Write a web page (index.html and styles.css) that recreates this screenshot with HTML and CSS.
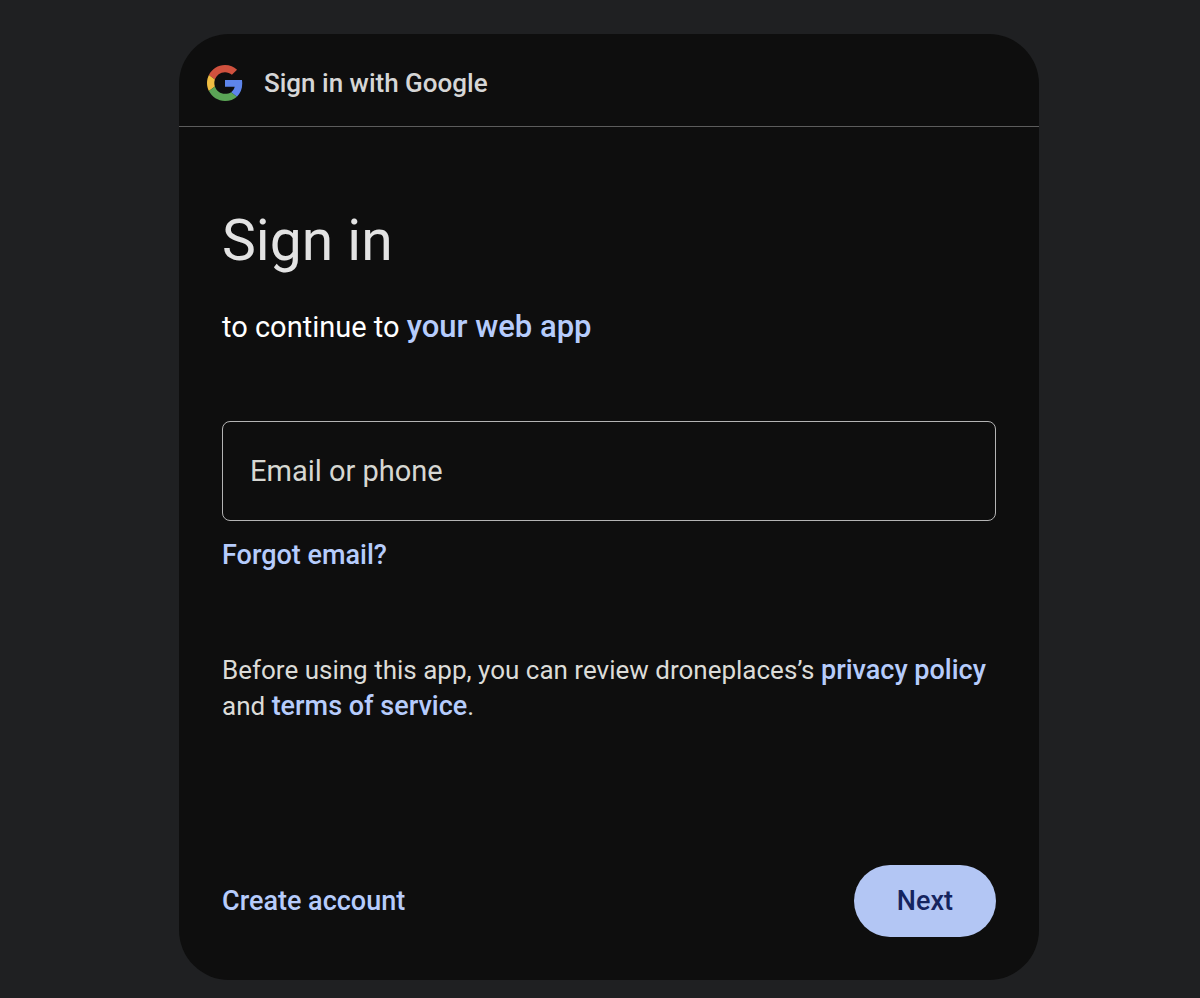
FILE: index.html
```
<!DOCTYPE html>
<html lang="en">
<head>
<meta charset="utf-8">
<meta name="viewport" content="width=device-width, initial-scale=1">
<title>Sign in</title>
<link rel="stylesheet" href="styles.css">
</head>
<body>
<main class="card">
  <header class="card-header">
    <svg class="logo" viewBox="0 0 48 48" aria-hidden="true">
      <path fill="#cf513e" d="M24 9.5c3.54 0 6.71 1.22 9.21 3.6l6.85-6.85C35.9 2.38 30.47 0 24 0 14.62 0 6.51 5.38 2.56 13.22l7.98 6.19C12.43 13.72 17.74 9.5 24 9.5z"/>
      <path fill="#5e85eb" d="M46.98 24.55c0-1.57-.15-3.09-.38-4.55H24v9.02h12.94c-.58 2.96-2.26 5.48-4.78 7.18l7.73 6c4.51-4.18 7.09-10.36 7.09-17.65z"/>
      <path fill="#f0bd42" d="M10.53 28.59c-.48-1.45-.76-2.99-.76-4.59s.27-3.14.76-4.59l-7.98-6.19C.92 16.46 0 20.12 0 24c0 3.88.92 7.54 2.56 10.78l7.97-6.19z"/>
      <path fill="#5ba556" d="M24 48c6.48 0 11.93-2.13 15.89-5.81l-7.73-6c-2.15 1.45-4.92 2.3-8.16 2.3-6.26 0-11.57-4.22-13.47-9.91l-7.98 6.19C6.51 42.62 14.62 48 24 48z"/>
    </svg>
    <span class="brand">Sign in with Google</span>
  </header>
  <form class="content">
    <h1 class="title">Sign in</h1>
    <p class="subtitle">to continue to <a class="link link-large" href="#app">your web app</a></p>
    <input class="field" type="text" name="identifier" placeholder="Email or phone" aria-label="Email or phone">
    <a class="link forgot" href="#forgot">Forgot email?</a>
    <p class="legal">Before using this app, you can review droneplaces’s <a class="link" href="#privacy">privacy policy</a> and <a class="link" href="#terms">terms of service</a>.</p>
    <div class="actions">
      <a class="link" href="#create">Create account</a>
      <button class="next" type="button">Next</button>
    </div>
  </form>
</main>
</body>
</html>
```
FILE: styles.css
```
* {
  box-sizing: border-box;
}

body {
  margin: 0;
  min-height: 100vh;
  padding: 34px 16px 18px 34px;
  display: flex;
  justify-content: center;
  background: #1f2022;
  color: #e3e3e3;
  font-family: Roboto, "Liberation Sans", sans-serif;
  font-size: 26px;
  line-height: 36px;
}

.card {
  width: 100%;
  max-width: 860px;
  display: flex;
  flex-direction: column;
  border-radius: 50px;
  background: #0e0e0e;
}

.card-header {
  display: flex;
  align-items: center;
  gap: 21px;
  padding: 31px 28px 25px;
  border-bottom: 1px solid #5c5c5c;
}

.brand {
  color: #d6d6d6;
  font-weight: 500;
}

.logo {
  width: 36px;
  height: 36px;
}

.content {
  flex: 1;
  display: flex;
  flex-direction: column;
  align-items: stretch;
  padding: 78px 43px 43px;
}

.title {
  margin: 0;
  font-size: 57px;
  font-weight: 400;
  line-height: 72px;
}

.subtitle {
  margin: 30px 0 0;
  color: #fff;
  font-size: 29px;
  line-height: 40px;
}

.link {
  color: #b6ccfc;
  font-size: 27px;
  font-weight: 500;
  text-decoration: none;
}

.link-large {
  font-size: 31px;
}

.field {
  width: 100%;
  height: 100px;
  margin-top: 74px;
  padding: 0 27px;
  border: 1px solid #b4b4b4;
  border-radius: 8px;
  background: transparent;
  color: #e3e3e3;
  font: inherit;
  font-size: 29px;
}

.field::placeholder {
  color: #d6d7d2;
  opacity: 1;
}

.forgot {
  align-self: flex-start;
  margin-top: 16px;
}

.legal {
  margin: 79px 0 0;
  color: #dcdcd8;
}

.actions {
  display: flex;
  align-items: center;
  justify-content: space-between;
  margin-top: auto;
}

.next {
  height: 72px;
  padding: 0 43px;
  border: 0;
  border-radius: 36px;
  background: #b3c6f4;
  color: #15245f;
  font: inherit;
  font-size: 27px;
  font-weight: 500;
}
```
